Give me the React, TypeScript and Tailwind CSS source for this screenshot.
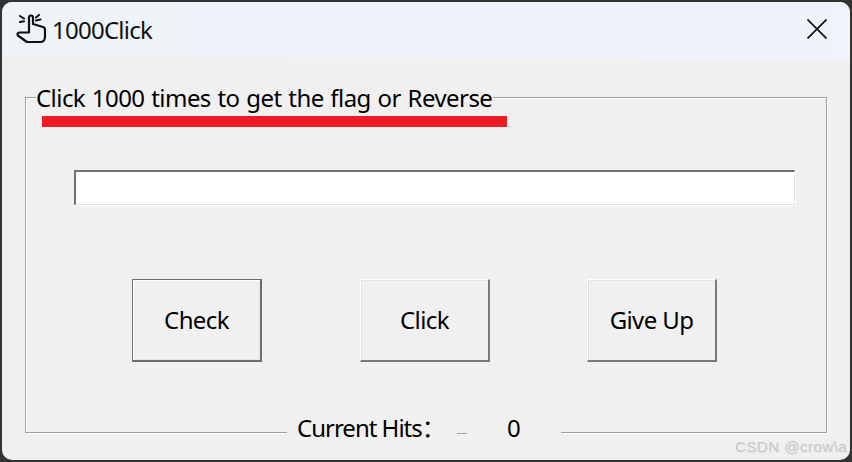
const sans = "font-['Noto_Sans','Noto_Sans_CJK_SC',sans-serif]";

const HandIcon = () => (
  <svg width="32" height="32" viewBox="0 0 32 32" fill="none" stroke="#111111" strokeWidth="2.200" strokeLinecap="round" strokeLinejoin="round">
    <path d="M14 18.500V3.500a2 2 0 0 1 4 0V10l10 3c1.500 .5 2 1.500 2 3v6.500c0 3-1.500 5.500-4 5.500H12L2.800 21.500c-1-1.500 0-3 2.200-3h9" />
    <path d="M5 2l4 2.500M5 8l4-.7M24 1l-3 2.500M25.500 5.500l-4.500 1" strokeWidth="2" />
  </svg>
);

const PushButton = ({ label, strong, className }: { label: string; strong?: boolean; className?: string }) => (
  <button
    className={`w-[130px] h-[83px] bg-[#f0f0f0] text-[24px] tracking-[-0.6px] text-black border-t border-l border-r-2 border-b-2 ${
      strong
        ? "border-[#6e6e6e] shadow-[inset_1px_1px_0_#ffffff,inset_-1px_-1px_0_#e3e3e3]"
        : "border-t-white border-l-white border-r-[#7a7a7a] border-b-[#7a7a7a] shadow-[inset_1px_1px_0_#e3e3e3]"
    } ${className ?? ""}`}
  >
    {label}
  </button>
);

export default function App() {
  return (
    <div className={`w-[852px] h-[462px] bg-[#333333] p-[2px] overflow-hidden ${sans}`}>
      <div className="relative h-full rounded-[10px] overflow-hidden bg-[#f0f0f0] flex flex-col">
        <div className="h-[56px] shrink-0 bg-gradient-to-r from-[#eef3f8] to-[#eff3fc] flex items-center pl-[13px] pr-[23px]">
          <HandIcon />
          <span className="ml-[5px] text-[24px] tracking-[-0.75px] text-[#111111]">1000Click</span>
          <svg className="ml-auto -mt-[2px]" width="20" height="20" viewBox="0 0 20 20" stroke="#111111" strokeWidth="1.700">
            <path d="M.5 .5l19 19M19.500 .5l-19 19" />
          </svg>
        </div>

        <div className="px-[23px] pt-[39px]">
          <div className="relative w-[802px] h-[336px] border border-[#a0a0a0] shadow-[inset_1px_1px_0_#ffffff,1px_1px_0_#ffffff] pt-[72px] pl-[48px]">
            <span className="absolute left-[10px] -top-[16px] bg-[#f0f0f0] pr-[1px] text-[24px] leading-[32px] tracking-[-0.55px] [word-spacing:1px] text-black whitespace-nowrap">
              Click 1000 times to get the flag or Reverse
            </span>
            <div className="absolute left-[16px] top-[18px] w-[465px] h-[11px] bg-[#ed1c24]" />

            <div className="w-[721px] h-[35px] bg-white border-t-2 border-l-2 border-t-[#707070] border-l-[#707070] border-b border-r border-b-[#e3e3e3] border-r-[#e3e3e3] shadow-[1px_1px_0_#ffffff]" />

            <div className="flex gap-[97px] mt-[74px] ml-[58px]">
              <PushButton label="Check" strong className="mr-px" />
              <PushButton label="Click" />
              <PushButton label="Give Up" />
            </div>

            <div className="absolute left-[261px] -bottom-[12px] flex h-[32px] items-center bg-[#f0f0f0] text-[24px] text-black">
              <span className="w-[170px] pl-[10px] tracking-[-1px] whitespace-nowrap">Current Hits：</span>
              <div className="w-[10px] h-[1px] bg-[#a0a0a0] mt-[10px]" />
              <span className="w-[94px] pl-[40px]">0</span>
            </div>
          </div>
        </div>

        <span className="absolute left-[733px] top-[436px] text-[15px] leading-[18px] tracking-[0.5px] whitespace-nowrap text-[#c8c8c8] font-['Liberation_Sans',sans-serif] [text-shadow:1px_1px_0_#e4e4e4]">
          CSDN @crow\a
        </span>
      </div>
    </div>
  );
}
